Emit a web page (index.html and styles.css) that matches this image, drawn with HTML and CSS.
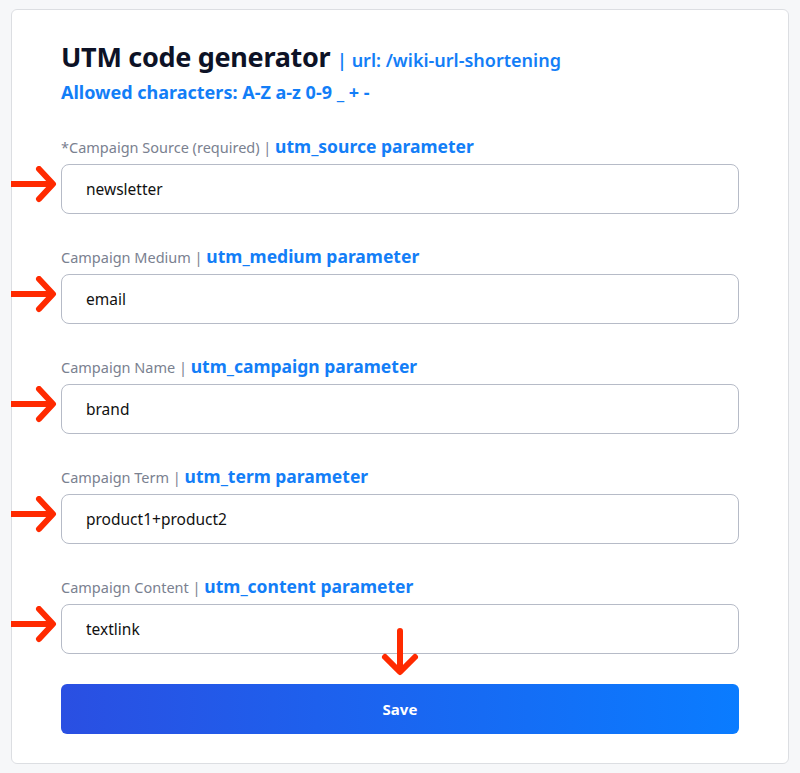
FILE: index.html
```html
<!DOCTYPE html>
<html lang="en">
<head>
    <meta charset="UTF-8">
    <meta name="viewport" content="width=device-width, initial-scale=1.0">
    <title>UTM code generator</title>
    <link rel="stylesheet" href="styles.css">
</head>
<body>
    <div class="card">
        <h1 class="title">UTM code generator <span class="title-url">| url: /wiki-url-shortening</span></h1>
        <p class="allowed">Allowed characters: A-Z a-z 0-9 _ + -</p>

        <form class="utm-form">
            <div class="field">
                <label class="field-label">*Campaign Source (required) | <b>utm_source parameter</b></label>
                <div class="input-wrap">
                    <svg class="arrow-right" width="50" height="40" viewBox="0 0 50 40"><path d="M3 18 H43 M31 3 L45 18 L31 33" fill="none" stroke="#ff2a00" stroke-width="6" stroke-linecap="round" stroke-linejoin="round"/></svg>
                    <input class="input-field" type="text" value="newsletter">
                </div>
            </div>
            <div class="field">
                <label class="field-label">Campaign Medium | <b>utm_medium parameter</b></label>
                <div class="input-wrap">
                    <svg class="arrow-right" width="50" height="40" viewBox="0 0 50 40"><path d="M3 18 H43 M31 3 L45 18 L31 33" fill="none" stroke="#ff2a00" stroke-width="6" stroke-linecap="round" stroke-linejoin="round"/></svg>
                    <input class="input-field" type="text" value="email">
                </div>
            </div>
            <div class="field">
                <label class="field-label">Campaign Name | <b>utm_campaign parameter</b></label>
                <div class="input-wrap">
                    <svg class="arrow-right" width="50" height="40" viewBox="0 0 50 40"><path d="M3 18 H43 M31 3 L45 18 L31 33" fill="none" stroke="#ff2a00" stroke-width="6" stroke-linecap="round" stroke-linejoin="round"/></svg>
                    <input class="input-field" type="text" value="brand">
                </div>
            </div>
            <div class="field">
                <label class="field-label">Campaign Term | <b>utm_term parameter</b></label>
                <div class="input-wrap">
                    <svg class="arrow-right" width="50" height="40" viewBox="0 0 50 40"><path d="M3 18 H43 M31 3 L45 18 L31 33" fill="none" stroke="#ff2a00" stroke-width="6" stroke-linecap="round" stroke-linejoin="round"/></svg>
                    <input class="input-field" type="text" value="product1+product2">
                </div>
            </div>
            <div class="field">
                <label class="field-label">Campaign Content | <b>utm_content parameter</b></label>
                <div class="input-wrap">
                    <svg class="arrow-right" width="50" height="40" viewBox="0 0 50 40"><path d="M3 18 H43 M31 3 L45 18 L31 33" fill="none" stroke="#ff2a00" stroke-width="6" stroke-linecap="round" stroke-linejoin="round"/></svg>
                    <input class="input-field" type="text" value="textlink">
                    <svg class="arrow-down" width="40" height="50" viewBox="0 0 40 50"><path d="M20 4 V44 M5 30 L20 45 L35 30" fill="none" stroke="#ff2a00" stroke-width="6" stroke-linecap="round" stroke-linejoin="round"/></svg>
                </div>
            </div>
            <button type="button" class="button">Save</button>
        </form>
    </div>
</body>
</html>
```

FILE: styles.css
```css
body {
    font-family: 'Noto Sans', 'Open Sans', sans-serif;
    background-color: #f6f7f9;
    margin: 9px 11px;
}
.card {
    background-color: #fff;
    border: 1px solid #dcdee2;
    border-radius: 6px;
    padding: 30px 49px 29px;
}
.title {
    font-size: 27px;
    font-weight: 700;
    color: #0d1226;
    margin: 0;
    line-height: 34px;
    letter-spacing: -0.3px;
}
.title-url {
    font-size: 18px;
    font-weight: 600;
    color: #137ef7;
    letter-spacing: 0;
}
.allowed {
    font-size: 18px;
    font-weight: 700;
    color: #137ef7;
    margin: 3px 0 0;
    line-height: 24px;
}
.utm-form {
    margin-top: 30px;
}
.field {
    margin-bottom: 30px;
}
.field-label {
    display: block;
    font-size: 14.5px;
    color: #7a8190;
    line-height: 24px;
    margin-bottom: 5px;
}
.field-label b {
    font-size: 17.5px;
    font-weight: 700;
    color: #137ef7;
}
.input-wrap {
    position: relative;
}
.input-field {
    display: block;
    box-sizing: border-box;
    width: 100%;
    height: 50px;
    padding: 0 24px;
    border: 1px solid #b6bbc7;
    border-radius: 8px;
    font-family: inherit;
    font-size: 15.5px;
    color: #111;
    background: #fff;
}
.arrow-right {
    position: absolute;
    left: -53px;
    top: 2px;
}
.arrow-down {
    position: absolute;
    left: 319px;
    top: 23px;
}
.button {
    display: block;
    width: 100%;
    height: 50px;
    border: none;
    border-radius: 6px;
    background: linear-gradient(90deg, #2a4fe2, #0a7cff);
    color: #fff;
    font-family: inherit;
    font-size: 15px;
    font-weight: 700;
    cursor: pointer;
}
```
